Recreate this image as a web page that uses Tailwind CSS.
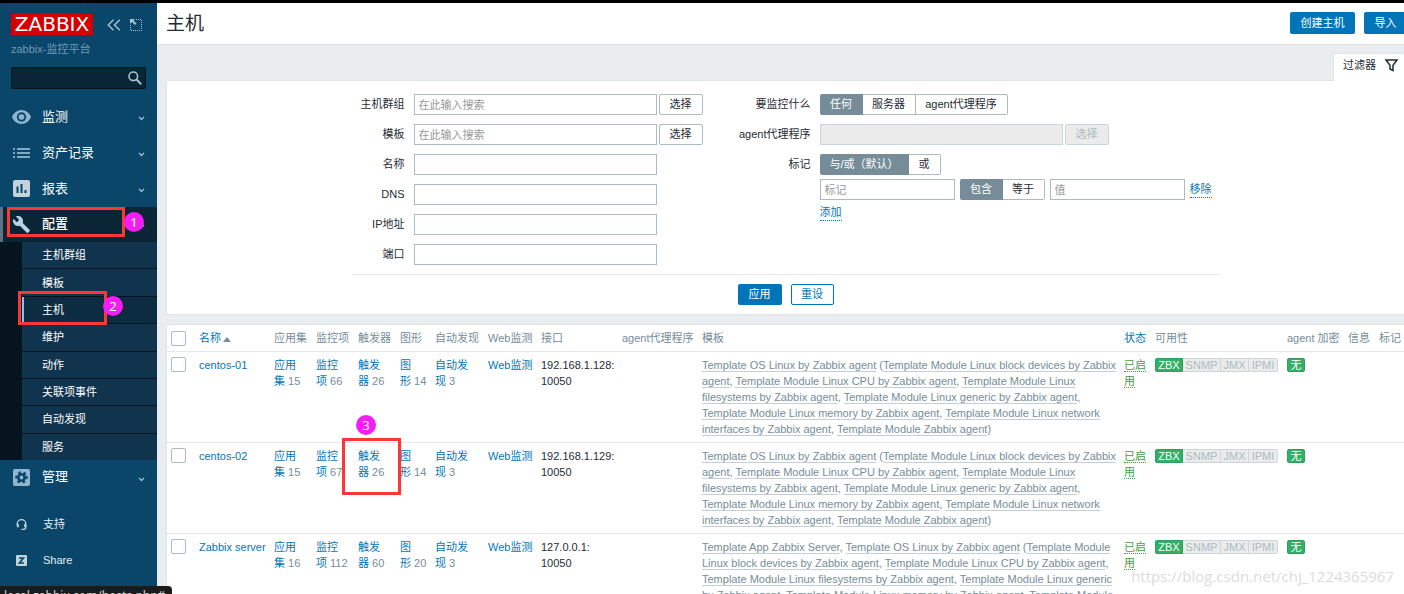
<!DOCTYPE html>
<html lang="zh-CN">
<head>
    <meta charset="UTF-8">
    <meta name="viewport" content="width=device-width, initial-scale=1.0">
    <title>主机</title>
    <script src="https://cdn.jsdelivr.net/npm/@tailwindcss/browser@4"></script>
</head>
<body class="h-screen overflow-hidden flex flex-col bg-[#e9edf0] border-t-3 border-black font-['Liberation_Sans','Noto_Sans_CJK_SC',sans-serif] text-[11px] leading-4 text-[#1f2c33]">

    <div class="relative flex flex-1 min-h-0">

        <!-- Sidebar -->
        <aside class="relative w-[157px] shrink-0 bg-[#0a466a] text-[#e4edf2]">
            <div class="flex items-center pt-[11px] pl-[11px]">
                <a href="#" class="w-[82px] h-[21px] bg-[#d40000] text-white text-center text-[20px] leading-[21px] font-['DejaVu_Sans',sans-serif]">ZABBIX</a>
                <button class="ml-[14px]" aria-label="收起">
                    <svg class="w-[14px] h-[12px]" viewBox="0 0 14 12" fill="none" stroke="#a9c2d1" stroke-width="1.4"><path d="M6.5 .7 1.2 6l5.3 5.3M12.8.7 7.500 6l5.300 5.300"/></svg>
                </button>
                <button class="ml-[9px]" aria-label="隐藏">
                    <svg class="w-[12px] h-[12px]" viewBox="0 0 12 12" fill="none" stroke="#a9c2d1"><path stroke-dasharray="1 1" d="M6 .5h5.500v11h-11V6"/><path fill="#a9c2d1" stroke="none" d="M0 0h5L3.500 1.500l3 3-1.500 1.500-3-3L0 5z"/></svg>
                </button>
            </div>
            <div class="mt-[6px] pl-[11px] text-[#6f9ab3]">zabbix-监控平台</div>
            <div class="relative mt-[10px] mx-[11px]">
                <input type="text" aria-label="搜索" class="block w-full h-[22px] rounded-xs border border-[#04121b] bg-[#0a2636] px-2">
                <svg class="absolute right-1 top-1 size-[14px]" viewBox="0 0 14 14" fill="none" stroke="#a9c2d1" stroke-width="1.600"><circle cx="5.300" cy="5.300" r="4.300"/><path stroke-width="2" d="m8.500 8.500 4.700 4.700"/></svg>
            </div>

            <nav class="mt-[10px] text-[13px] text-white">
                <a href="#" class="flex items-center h-9 pb-px pl-3 pr-3">
                    <svg class="w-[19px] h-[14px]" viewBox="0 0 19 14"><path fill="#8fb6cf" d="M9.500 0C5.200 0 1.500 2.900 0 7c1.500 4.100 5.200 7 9.500 7S17.500 11.100 19 7c-1.500-4.100-5.200-7-9.500-7z"/><circle cx="9.500" cy="7" r="4.700" fill="#0a466a"/><circle cx="9.500" cy="7" r="2.800" fill="#8fb6cf"/></svg>
                    <span class="ml-[11px] flex-1">监测</span>
                    <svg class="w-[7px] h-[5px] mt-1" viewBox="0 0 7 5" fill="none" stroke="#a9c2d1" stroke-width="1.200"><path d="m1 .8 2.500 2.700L6 .8"/></svg>
                </a>
                <a href="#" class="flex items-center h-9 pb-px pl-[13px] pr-3">
                    <svg class="w-[17px] h-[10px]" viewBox="0 0 17 10" fill="#7fa9c4"><path d="M0 0h2v2H0zM0 4h2v2H0zM0 8h2v2H0zM4 0h13v2H4zM4 4h13v2H4zM4 8h13v2H4z"/></svg>
                    <span class="ml-3 flex-1">资产记录</span>
                    <svg class="w-[7px] h-[5px] mt-1" viewBox="0 0 7 5" fill="none" stroke="#a9c2d1" stroke-width="1.200"><path d="m1 .8 2.500 2.700L6 .8"/></svg>
                </a>
                <a href="#" class="flex items-center h-9 pb-px pl-[13px] pr-3">
                    <svg class="size-[17px]" viewBox="0 0 17 17"><rect width="17" height="17" rx="2" fill="#c3d3dc"/><path fill="#0a466a" d="M3.500 6.500h2V13h-2zM7.500 4h2v9h-2zM11.500 10h2v3h-2z"/></svg>
                    <span class="ml-3 flex-1">报表</span>
                    <svg class="w-[7px] h-[5px] mt-1" viewBox="0 0 7 5" fill="none" stroke="#a9c2d1" stroke-width="1.200"><path d="m1 .8 2.500 2.700L6 .8"/></svg>
                </a>
                <a href="#" class="flex items-center h-[35px] pb-px border-l-3 border-[#5d7480] pl-[10px] pr-3 bg-[#0a2535]">
                    <svg class="size-[17px]" viewBox="1 1 22 22" fill="#b5d3e6"><path d="m22.700 19-9.100-9.100c.9-2.300.4-5-1.500-6.900-2-2-5-2.400-7.400-1.300L9 6 6 9 1.600 4.700C.4 7.100.9 10.100 2.900 12.100c1.900 1.900 4.600 2.400 6.900 1.500l9.100 9.100c.4.4 1 .4 1.400 0l2.300-2.300c.5-.4.5-1.100.1-1.400z"/></svg>
                    <span class="ml-3 flex-1 font-medium">配置</span>
                    <svg class="w-[7px] h-[5px] mt-1" viewBox="0 0 7 5" fill="none" stroke="#a9c2d1" stroke-width="1.200"><path d="m1 .8 2.500 2.700L6 .8"/></svg>
                </a>
                <div class="pl-[22px] bg-[#05141e]">
                    <ul class="grid h-[218px] auto-rows-fr gap-px text-[11px] bg-[#05141e] [&_a]:flex [&_a]:h-full [&_a]:items-center [&_a]:pl-5 [&_a]:bg-[#10344d]">
                        <li><a href="#">主机群组</a></li>
                        <li><a href="#">模板</a></li>
                        <li><a href="#" class="border-l-2 border-[#83c4f5] !pl-[18px] !bg-[#0b2c41]">主机</a></li>
                        <li><a href="#">维护</a></li>
                        <li><a href="#">动作</a></li>
                        <li><a href="#">关联项事件</a></li>
                        <li><a href="#">自动发现</a></li>
                        <li><a href="#">服务</a></li>
                    </ul>
                </div>
                <a href="#" class="flex items-center h-[35px] pb-px pl-[13px] pr-3">
                    <svg class="size-[17px]" viewBox="0 0 17 17"><rect width="17" height="17" rx="2" fill="#8fb6cf"/><circle cx="8.500" cy="8.500" r="3.200" fill="none" stroke="#0a466a" stroke-width="2.600"/><circle cx="8.500" cy="8.500" r="5" fill="none" stroke="#0a466a" stroke-width="2.400" stroke-dasharray="2.600 2.636" stroke-dashoffset="-1.300" transform="rotate(-30 8.500 8.500)"/></svg>
                    <span class="ml-3 flex-1">管理</span>
                    <svg class="w-[7px] h-[5px] mt-1" viewBox="0 0 7 5" fill="none" stroke="#a9c2d1" stroke-width="1.200"><path d="m1 .8 2.500 2.700L6 .8"/></svg>
                </a>
            </nav>
            <nav class="mt-[11px]">
                <a href="#" class="flex items-center h-9 pl-4">
                    <svg class="size-[11px]" viewBox="0 0 11 11" fill="none" stroke="#c3d3dc"><path stroke-width="1.300" d="M1.200 6V5a4.300 4.300 0 0 1 8.600 0v4.200L8.300 10.400H5.500"/><path stroke-width="2" d="M1.800 5v3.300M9.200 5v3.300"/></svg>
                    <span class="ml-4">支持</span>
                </a>
                <a href="#" class="flex items-center h-9 pl-4">
                    <svg class="size-[11px]" viewBox="0 0 11 11"><rect width="11" height="11" rx="1" fill="#c3d3dc"/><path fill="none" stroke="#0a466a" stroke-width="1.600" d="M3 3h4.500L3.400 8H8"/></svg>
                    <span class="ml-4">Share</span>
                </a>
            </nav>

            <!-- Step marks -->
            <div class="absolute left-[7px] top-[204px] w-[118px] h-[30px] border-3 border-[#ff3636]"></div>
            <div class="absolute left-[124px] top-[209px] size-5 rounded-full bg-[#f41df4] text-white text-center text-[13px] leading-5 font-['Noto_Sans',sans-serif]">1</div>
            <div class="absolute left-[18px] top-[288px] w-[89px] h-[34px] border-3 border-[#ff3636]"></div>
            <div class="absolute left-[103px] top-[293px] size-5 rounded-full bg-[#f41df4] text-white text-center text-[13px] leading-5 font-['Noto_Sans',sans-serif]">2</div>
        </aside>

        <main class="flex-1 min-w-0 overflow-hidden">
            <header class="flex items-center h-[42px] pl-[9px] bg-white border-b border-[#dfe4e7]">
                <h1 class="flex-1 text-[19px] leading-6">主机</h1>
                <div class="flex gap-[9px] pb-px -mr-[3px] [&_button]:h-[22px] [&_button]:rounded-xs [&_button]:bg-[#0275b8] [&_button]:text-white">
                    <button class="w-[65px]">创建主机</button>
                    <button class="w-[43px]">导入</button>
                </div>
            </header>

            <div class="pl-[9px]">
                <div class="flex justify-end pt-2">
                    <a href="#" class="relative -mb-px h-[28px] flex items-center gap-[9px] pl-[9px] pr-[6px] pb-[5px] bg-white border-l border-t border-[#dfe4e7]">过滤器
                        <svg class="w-[13px] h-[13px]" viewBox="0 0 13 13" fill="none" stroke="#1f2c33" stroke-width="1.500"><path d="M1 1h11L8 6.200v5.300L5 10V6.200z"/></svg>
                    </a>
                </div>

                <!-- Filter -->
                <form class="bg-white border border-r-0 border-[#dfe4e7] [&_button]:pb-px">
                    <div class="w-[868px] mx-auto">
                        <div class="flex pt-[13px] pb-[9px] border-b border-[#ebebeb]">
                            <div class="w-[351px] grid grid-cols-[53px_1fr] gap-x-[9px] gap-y-[9px] [&_label]:text-right [&_label]:leading-[21px] [&_input]:w-[243px] [&_input]:h-[21px] [&_input]:px-1 [&_input]:border [&_input]:border-[#acbbc2] [&_input]:placeholder:text-[#999999] [&_button]:h-[21px] [&_button]:w-11 [&_button]:rounded-xs [&_button]:border [&_button]:border-[#acbbc2]">
                                <label for="groups">主机群组</label>
                                <div class="flex gap-0.5"><input id="groups" type="text" placeholder="在此输入搜索"><button type="button">选择</button></div>
                                <label for="templates">模板</label>
                                <div class="flex gap-0.5"><input id="templates" type="text" placeholder="在此输入搜索"><button type="button">选择</button></div>
                                <label for="name">名称</label>
                                <div class="flex"><input id="name" type="text"></div>
                                <label for="dns">DNS</label>
                                <div class="flex"><input id="dns" type="text"></div>
                                <label for="ip">IP地址</label>
                                <div class="flex"><input id="ip" type="text"></div>
                                <label for="port">端口</label>
                                <div class="flex"><input id="port" type="text"></div>
                            </div>
                            <div class="flex-1 grid grid-cols-[108px_1fr] gap-x-[9px] gap-y-[9px] content-start [&_input]:border [&_input]:h-[21px] [&_input]:placeholder:text-[#999999]">
                                <span class="text-right leading-[21px]">要监控什么</span>
                                <div class="flex h-[21px]">
                                    <button type="button" class="w-[43px] rounded-l-xs bg-[#768d99] text-white">任何</button>
                                    <button type="button" class="w-[53px] border border-l-0 border-[#acbbc2]">服务器</button>
                                    <button type="button" class="w-[92px] border border-l-0 rounded-r-xs border-[#acbbc2]">agent代理程序</button>
                                </div>
                                <label for="proxy" class="text-right leading-[21px]">agent代理程序</label>
                                <div class="flex gap-0.5">
                                    <input id="proxy" type="text" disabled class="w-[243px] bg-[#ebebeb] border-[#ccd5d9]">
                                    <button type="button" disabled class="w-11 h-[21px] rounded-xs border border-[#ccd5d9] bg-[#ebebeb] text-[#acbbc2]">选择</button>
                                </div>
                                <span class="text-right leading-[21px]">标记</span>
                                <div>
                                    <div class="flex h-[21px]">
                                        <button type="button" class="w-[89px] rounded-l-xs bg-[#768d99] text-white">与/或（默认）</button>
                                        <button type="button" class="w-8 border border-l-0 rounded-r-xs border-[#acbbc2]">或</button>
                                    </div>
                                    <div class="flex items-center mt-1 gap-[5px] whitespace-nowrap">
                                        <input type="text" aria-label="标记" placeholder="标记" class="w-[135px] px-1 border-[#acbbc2]">
                                        <div class="flex h-[21px]">
                                            <button type="button" class="w-[43px] rounded-l-xs bg-[#768d99] text-white">包含</button>
                                            <button type="button" class="w-[42px] border border-l-0 rounded-r-xs border-[#acbbc2]">等于</button>
                                        </div>
                                        <input type="text" aria-label="值" placeholder="值" class="w-[135px] px-1 border-[#acbbc2]">
                                        <a href="#" class="leading-4 text-[#0275b8] border-b border-dotted border-[#0275b8]">移除</a>
                                    </div>
                                    <a href="#" class="inline-block mt-1 leading-4 text-[#0275b8] border-b border-dotted border-[#0275b8]">添加</a>
                                </div>
                            </div>
                        </div>
                        <div class="flex justify-center gap-[9px] pt-[9px] pb-[9px]">
                            <button type="button" class="w-11 h-[21px] rounded-xs bg-[#0275b8] text-white">应用</button>
                            <button type="button" class="w-[43px] h-[21px] rounded-xs border border-[#0275b8] text-[#0275b8]">重设</button>
                        </div>
                    </div>
                </form>

                <!-- Hosts -->
                <div class="relative mt-[9px] bg-white border-l border-t border-[#dfe4e7]">
                    <table class="w-full table-fixed whitespace-nowrap text-left [&_th]:pl-[5px] [&_th]:py-[5px] [&_th]:font-normal [&_th]:text-[#768d99] [&_td]:pl-[5px] [&_td]:pr-1 [&_td]:py-[5px] [&_td]:align-top [&_tr]:border-b [&_tr]:border-[#e4e8ea] [&_tr>*:first-child]:pl-1 [&_input]:block [&_input]:appearance-none [&_input]:size-[15px] [&_input]:rounded-xs [&_input]:border [&_input]:border-[#acbbc2]">
                        <colgroup>
                            <col class="w-[27px]"><col class="w-[75px]"><col class="w-[42px]"><col class="w-[42px]"><col class="w-[42px]"><col class="w-[35px]"><col class="w-[53px]"><col class="w-[53px]"><col class="w-[81px]"><col class="w-[80px]"><col><col class="w-[31px]"><col class="w-[132px]"><col class="w-[61px]"><col class="w-[31px]"><col class="w-[30px]">
                        </colgroup>
                        <thead>
                            <tr>
                                <th><input type="checkbox" aria-label="全选"></th>
                                <th><a href="#" class="text-[#0275b8]">名称<svg class="inline ml-0.5 w-[8px] h-[5px]" viewBox="0 0 8 5"><path fill="#768d99" d="M4 0 8 5H0z"/></svg></a></th>
                                <th>应用集</th>
                                <th>监控项</th>
                                <th>触发器</th>
                                <th>图形</th>
                                <th>自动发现</th>
                                <th>Web监测</th>
                                <th>接口</th>
                                <th>agent代理程序</th>
                                <th>模板</th>
                                <th><a href="#" class="text-[#0275b8]">状态</a></th>
                                <th>可用性</th>
                                <th>agent 加密</th>
                                <th>信息</th>
                                <th>标记</th>
                            </tr>
                        </thead>
                        <tbody class="text-[#768d99] [&_.lnk]:text-[#0275b8] [&_.tpl]:border-b [&_.tpl]:border-[#c5ced3] [&_.on]:text-[#429e47] [&_.on]:border-b [&_.on]:border-dotted [&_.on]:border-[#429e47]">
                            <tr>
                                <td><input type="checkbox" aria-label="centos-01"></td>
                                <td><a href="#" class="lnk">centos-01</a></td>
                                <td><a href="#" class="lnk">应用<br>集</a> 15</td>
                                <td><a href="#" class="lnk">监控<br>项</a> 66</td>
                                <td><a href="#" class="lnk">触发<br>器</a> 26</td>
                                <td><a href="#" class="lnk">图<br>形</a> 14</td>
                                <td><a href="#" class="lnk">自动发<br>现</a> 3</td>
                                <td><a href="#" class="lnk">Web监测</a></td>
                                <td class="text-[#1f2c33]">192.168.1.128:<br>10050</td>
                                <td></td>
                                <td><a href="#" class="tpl">Template OS Linux by Zabbix agent</a> (<a href="#" class="tpl">Template Module Linux block devices by Zabbix<br>agent</a>, <a href="#" class="tpl">Template Module Linux CPU by Zabbix agent</a>, <a href="#" class="tpl">Template Module Linux<br>filesystems by Zabbix agent</a>, <a href="#" class="tpl">Template Module Linux generic by Zabbix agent</a>,<br><a href="#" class="tpl">Template Module Linux memory by Zabbix agent</a>, <a href="#" class="tpl">Template Module Linux network<br>interfaces by Zabbix agent</a>, <a href="#" class="tpl">Template Module Zabbix agent</a>)</td>
                                <td><a href="#" class="on">已启<br>用</a></td>
                                <td><div class="flex mt-px h-[14px] leading-3 text-[#acbbc2] [&_span]:border [&_span]:border-[#ccd5d9] [&_span]:bg-[#ebebeb] [&_span]:text-center"><span class="w-7 rounded-l-xs !border-[#2f9f5e] !bg-[#34af67] text-white">ZBX</span><span class="w-[38px] !border-l-0">SNMP</span><span class="w-7 !border-l-0">JMX</span><span class="w-[29px] !border-l-0 rounded-r-xs">IPMI</span></div></td>
                                <td><span class="block mt-px w-[18px] h-[14px] leading-3 rounded-xs border border-[#2f9f5e] bg-[#34af67] text-white text-center">无</span></td>
                                <td></td>
                                <td></td>
                            </tr>
                            <tr>
                                <td><input type="checkbox" aria-label="centos-02"></td>
                                <td><a href="#" class="lnk">centos-02</a></td>
                                <td><a href="#" class="lnk">应用<br>集</a> 15</td>
                                <td><a href="#" class="lnk">监控<br>项</a> 67</td>
                                <td><a href="#" class="lnk">触发<br>器</a> 26</td>
                                <td><a href="#" class="lnk">图<br>形</a> 14</td>
                                <td><a href="#" class="lnk">自动发<br>现</a> 3</td>
                                <td><a href="#" class="lnk">Web监测</a></td>
                                <td class="text-[#1f2c33]">192.168.1.129:<br>10050</td>
                                <td></td>
                                <td><a href="#" class="tpl">Template OS Linux by Zabbix agent</a> (<a href="#" class="tpl">Template Module Linux block devices by Zabbix<br>agent</a>, <a href="#" class="tpl">Template Module Linux CPU by Zabbix agent</a>, <a href="#" class="tpl">Template Module Linux<br>filesystems by Zabbix agent</a>, <a href="#" class="tpl">Template Module Linux generic by Zabbix agent</a>,<br><a href="#" class="tpl">Template Module Linux memory by Zabbix agent</a>, <a href="#" class="tpl">Template Module Linux network<br>interfaces by Zabbix agent</a>, <a href="#" class="tpl">Template Module Zabbix agent</a>)</td>
                                <td><a href="#" class="on">已启<br>用</a></td>
                                <td><div class="flex mt-px h-[14px] leading-3 text-[#acbbc2] [&_span]:border [&_span]:border-[#ccd5d9] [&_span]:bg-[#ebebeb] [&_span]:text-center"><span class="w-7 rounded-l-xs !border-[#2f9f5e] !bg-[#34af67] text-white">ZBX</span><span class="w-[38px] !border-l-0">SNMP</span><span class="w-7 !border-l-0">JMX</span><span class="w-[29px] !border-l-0 rounded-r-xs">IPMI</span></div></td>
                                <td><span class="block mt-px w-[18px] h-[14px] leading-3 rounded-xs border border-[#2f9f5e] bg-[#34af67] text-white text-center">无</span></td>
                                <td></td>
                                <td></td>
                            </tr>
                            <tr>
                                <td><input type="checkbox" aria-label="Zabbix server"></td>
                                <td><a href="#" class="lnk">Zabbix server</a></td>
                                <td><a href="#" class="lnk">应用<br>集</a> 16</td>
                                <td><a href="#" class="lnk">监控<br>项</a> 112</td>
                                <td><a href="#" class="lnk">触发<br>器</a> 60</td>
                                <td><a href="#" class="lnk">图<br>形</a> 20</td>
                                <td><a href="#" class="lnk">自动发<br>现</a> 3</td>
                                <td><a href="#" class="lnk">Web监测</a></td>
                                <td class="text-[#1f2c33]">127.0.0.1:<br>10050</td>
                                <td></td>
                                <td><a href="#" class="tpl">Template App Zabbix Server</a>, <a href="#" class="tpl">Template OS Linux by Zabbix agent</a> (<a href="#" class="tpl">Template Module<br>Linux block devices by Zabbix agent</a>, <a href="#" class="tpl">Template Module Linux CPU by Zabbix agent</a>,<br><a href="#" class="tpl">Template Module Linux filesystems by Zabbix agent</a>, <a href="#" class="tpl">Template Module Linux generic<br>by Zabbix agent</a>, <a href="#" class="tpl">Template Module Linux memory by Zabbix agent</a>, <a href="#" class="tpl">Template Module</a></td>
                                <td><a href="#" class="on">已启<br>用</a></td>
                                <td><div class="flex mt-px h-[14px] leading-3 text-[#acbbc2] [&_span]:border [&_span]:border-[#ccd5d9] [&_span]:bg-[#ebebeb] [&_span]:text-center"><span class="w-7 rounded-l-xs !border-[#2f9f5e] !bg-[#34af67] text-white">ZBX</span><span class="w-[38px] !border-l-0">SNMP</span><span class="w-7 !border-l-0">JMX</span><span class="w-[29px] !border-l-0 rounded-r-xs">IPMI</span></div></td>
                                <td><span class="block mt-px w-[18px] h-[14px] leading-3 rounded-xs border border-[#2f9f5e] bg-[#34af67] text-white text-center">无</span></td>
                                <td></td>
                                <td></td>
                            </tr>
                        </tbody>
                    </table>
                    <div class="absolute left-[175px] top-[113px] w-[59px] h-[57px] border-3 border-[#ff3636]"></div>
                    <div class="absolute left-[189px] top-[90px] size-5 rounded-full bg-[#f41df4] text-white text-center text-[13px] leading-5 font-['Noto_Sans',sans-serif]">3</div>
                </div>
            </div>
        </main>

        <!-- Browser link hint and watermark -->
        <div class="absolute left-0 bottom-0 w-[172px] h-2 overflow-hidden rounded-tr bg-[#1b1b1b] pl-1 text-[12px] leading-5 text-[#d0d0d0] font-['Noto_Sans',sans-serif]">local.zabbix.com/hosts.php#</div>
        <div class="absolute right-[10px] bottom-2 text-[15px] leading-5 text-[#dcdcdc] font-['Open_Sans',sans-serif]">https://blog.csdn.net/chj_1224365967</div>
    </div>
</body>
</html>
